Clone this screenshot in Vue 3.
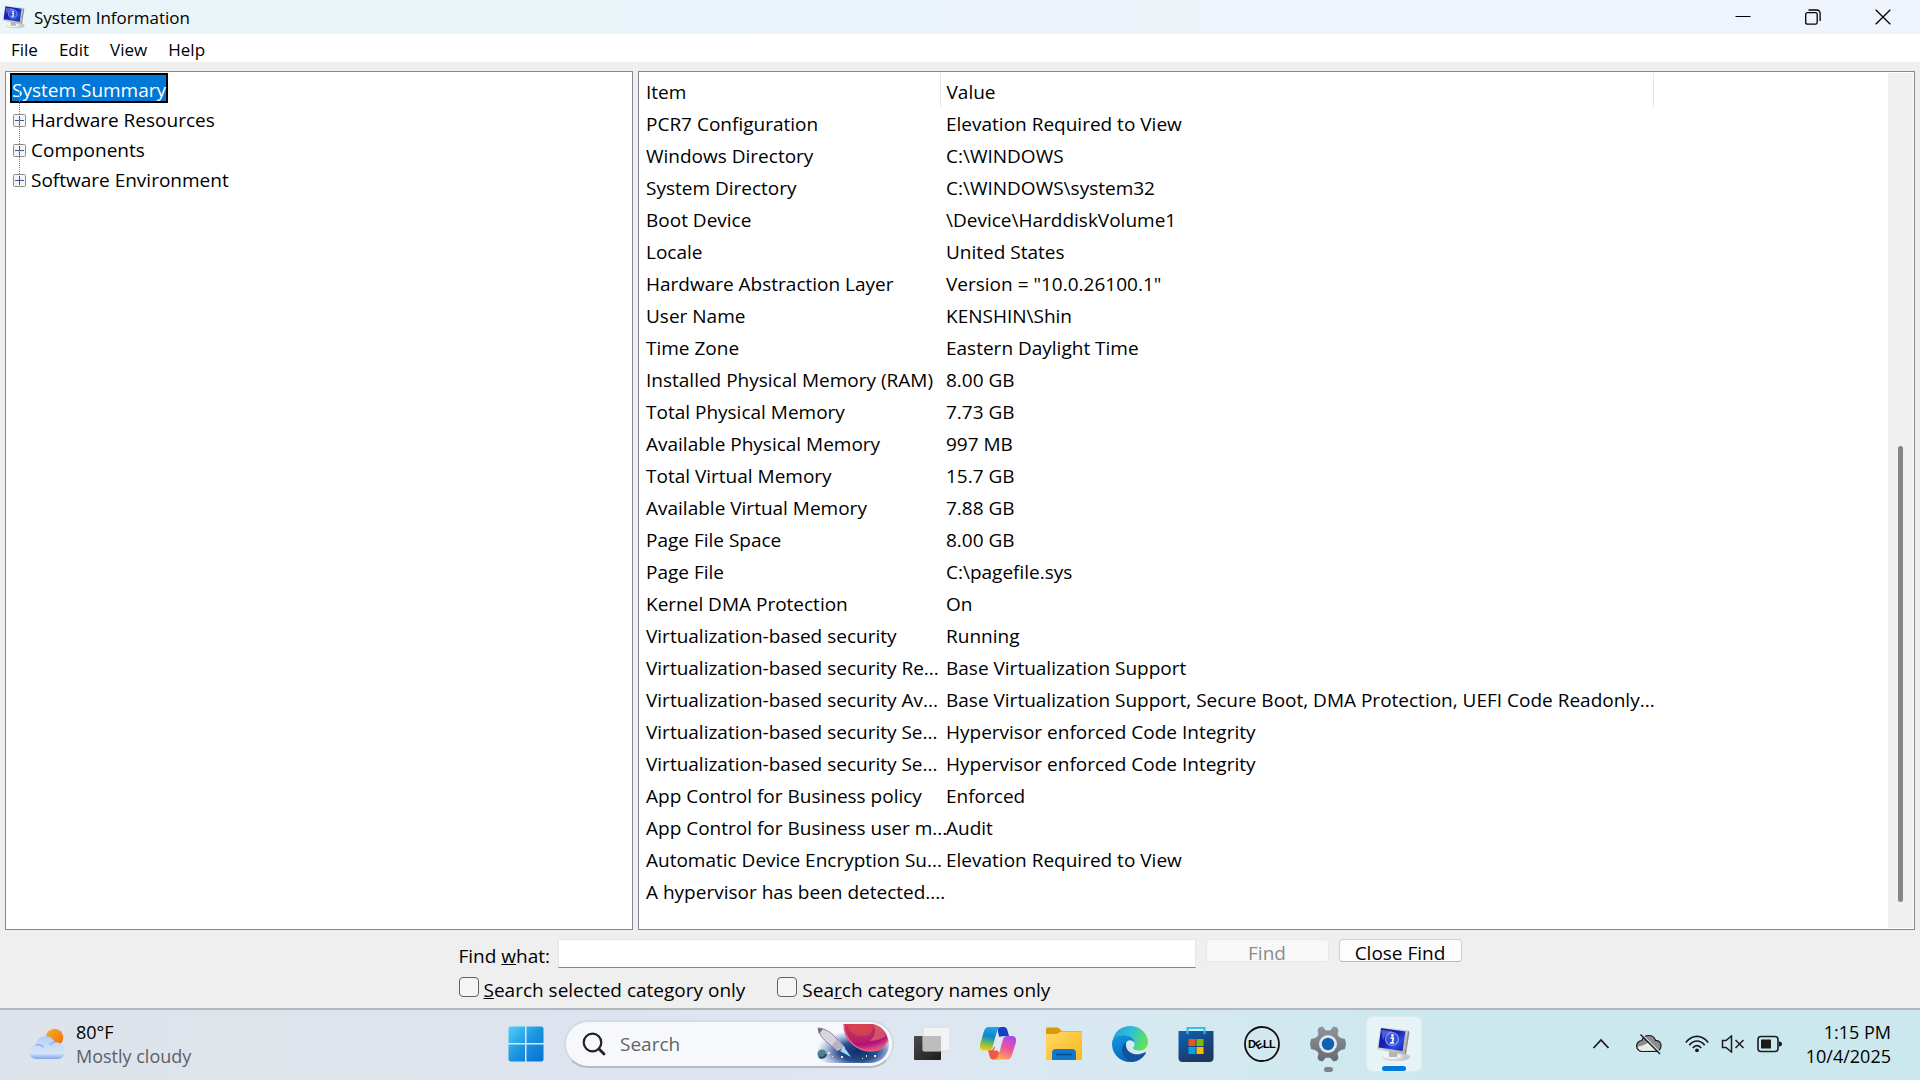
<script setup>
import { ref } from 'vue';

const menus = ['File', 'Edit', 'View', 'Help'];

const categories = ['Hardware Resources', 'Components', 'Software Environment'];

const rows = [
  { item: 'PCR7 Configuration', value: 'Elevation Required to View' },
  { item: 'Windows Directory', value: 'C:\\WINDOWS' },
  { item: 'System Directory', value: 'C:\\WINDOWS\\system32' },
  { item: 'Boot Device', value: '\\Device\\HarddiskVolume1' },
  { item: 'Locale', value: 'United States' },
  { item: 'Hardware Abstraction Layer', value: 'Version = "10.0.26100.1"' },
  { item: 'User Name', value: 'KENSHIN\\Shin' },
  { item: 'Time Zone', value: 'Eastern Daylight Time' },
  { item: 'Installed Physical Memory (RAM)', value: '8.00 GB' },
  { item: 'Total Physical Memory', value: '7.73 GB' },
  { item: 'Available Physical Memory', value: '997 MB' },
  { item: 'Total Virtual Memory', value: '15.7 GB' },
  { item: 'Available Virtual Memory', value: '7.88 GB' },
  { item: 'Page File Space', value: '8.00 GB' },
  { item: 'Page File', value: 'C:\\pagefile.sys' },
  { item: 'Kernel DMA Protection', value: 'On' },
  { item: 'Virtualization-based security', value: 'Running' },
  { item: 'Virtualization-based security Re...', value: 'Base Virtualization Support' },
  { item: 'Virtualization-based security Av...', value: 'Base Virtualization Support, Secure Boot, DMA Protection, UEFI Code Readonly...' },
  { item: 'Virtualization-based security Se...', value: 'Hypervisor enforced Code Integrity' },
  { item: 'Virtualization-based security Se...', value: 'Hypervisor enforced Code Integrity' },
  { item: 'App Control for Business policy', value: 'Enforced' },
  { item: 'App Control for Business user m...', value: 'Audit' },
  { item: 'Automatic Device Encryption Su...', value: 'Elevation Required to View' },
  { item: 'A hypervisor has been detected....', value: '' }
];

const findText = ref('');
const selectedOnly = ref(false);
const namesOnly = ref(false);
</script>

<template>
  <div class="desktop">
    <!-- shared gradients and the monitor icon -->
    <svg class="defs" width="0" height="0" aria-hidden="true">
      <defs>
        <linearGradient id="screen" x1="0" y1="0" x2="1" y2="1">
          <stop offset="0" stop-color="#0a1fb4" />
          <stop offset="0.45" stop-color="#1420b8" />
          <stop offset="0.7" stop-color="#2a4be0" />
          <stop offset="1" stop-color="#0a16a0" />
        </linearGradient>
        <linearGradient id="bezel" x1="0" y1="0" x2="1" y2="1">
          <stop offset="0" stop-color="#f4f4f4" />
          <stop offset="1" stop-color="#a9a9a9" />
        </linearGradient>
        <symbol id="monitor" viewBox="0 0 36 36">
          <ellipse cx="22" cy="31" rx="12" ry="4" fill="#8d9599" opacity="0.45" />
          <ellipse cx="17" cy="31" rx="11" ry="4" fill="#d7d7d7" />
          <ellipse cx="16" cy="30" rx="9" ry="3" fill="#f3f3f3" />
          <path d="M13 24l9 2-1 5h-8z" fill="#b5b5b5" />
          <path d="M4 0.500L32 4.500L28.500 28L1 23.500z" fill="url(#bezel)" />
          <path d="M32 4.500l1.500 1.500L30 28l-1.500 0z" fill="#8c8c8c" />
          <path d="M5 2L29.500 5.500L26.500 25L2.500 21.500z" fill="url(#screen)" />
          <path d="M5 4l2 10 3-6 3 5 3-8z" fill="#8ea0f0" opacity="0.5" />
          <circle cx="16" cy="13" r="6.500" fill="#3d5cd0" opacity="0.8" stroke="#a9b9f2" stroke-width="1.200" />
          <circle cx="16.500" cy="9.500" r="1.400" fill="#fff" />
          <path d="M14.500 12h2.800l-1 5h1.700M14 17h2" stroke="#fff" stroke-width="1.600" fill="none" />
        </symbol>
      </defs>
    </svg>

    <header class="titlebar">
      <svg class="title-icon" aria-hidden="true"><use href="#monitor" /></svg>
      <span class="title">System Information</span>
      <div class="window-buttons">
        <button type="button" aria-label="Minimize">
          <svg width="16" height="16" viewBox="0 0 16 16"><path d="M0.500 7.500h15" stroke="#000" /></svg>
        </button>
        <button type="button" aria-label="Restore">
          <svg width="16" height="16" viewBox="0 0 16 16" fill="none" stroke="#000" stroke-width="1.300">
            <rect x="0.700" y="3.700" width="11.500" height="11.500" rx="1.800" />
            <path d="M3.500 1h8.300a3.300 3.300 0 0 1 3.300 3.300v7.700" />
          </svg>
        </button>
        <button type="button" aria-label="Close">
          <svg width="16" height="16" viewBox="0 0 16 16"><path d="M0.700 0.700l14.600 14.600M15.300 0.700L0.700 15.300" stroke="#000" stroke-width="1.300" /></svg>
        </button>
      </div>
    </header>

    <nav class="menubar">
      <button v-for="menu in menus" :key="menu" type="button">{{ menu }}</button>
    </nav>

    <main class="panes">
      <section class="pane tree">
        <button type="button" class="summary">System Summary</button>
        <ul>
          <li v-for="category in categories" :key="category">
            <button type="button" class="expander" :aria-label="'Expand ' + category">
              <svg width="13" height="13" viewBox="0 0 13 13">
                <rect x="0.500" y="0.500" width="12" height="12" rx="1" fill="#f4f4f4" stroke="#8c8c8c" />
                <path d="M2 6.500h9M6.500 2v9" stroke="#3c5399" />
              </svg>
            </button>
            <span>{{ category }}</span>
          </li>
        </ul>
      </section>

      <section class="pane details">
        <table>
          <colgroup>
            <col class="col-item" />
            <col class="col-value" />
            <col />
          </colgroup>
          <thead>
            <tr>
              <th>Item</th>
              <th>Value</th>
              <th></th>
            </tr>
          </thead>
          <tbody>
            <tr v-for="(row, index) in rows" :key="index">
              <td>{{ row.item }}</td>
              <td>{{ row.value }}</td>
              <td></td>
            </tr>
          </tbody>
        </table>
        <div class="scrollbar">
          <div class="thumb"></div>
        </div>
      </section>
    </main>

    <form class="findbar" @submit.prevent>
      <div class="find-row">
        <label for="find">Find <u>w</u>hat:</label>
        <input id="find" v-model="findText" type="text" />
        <button type="submit" disabled>Find</button>
        <button type="button">Close Find</button>
      </div>
      <div class="check-row">
        <div class="check">
          <input id="selected" v-model="selectedOnly" type="checkbox" />
          <label for="selected"><u>S</u>earch selected category only</label>
        </div>
        <div class="check">
          <input id="names" v-model="namesOnly" type="checkbox" />
          <label for="names">Sea<u>r</u>ch category names only</label>
        </div>
      </div>
    </form>

    <footer class="taskbar">
      <div class="weather">
        <svg width="36" height="32" viewBox="0 0 36 32" aria-hidden="true">
          <defs>
            <linearGradient id="sun" x1="0" y1="0" x2="1" y2="1">
              <stop offset="0" stop-color="#f0b429" />
              <stop offset="1" stop-color="#f26a0a" />
            </linearGradient>
            <linearGradient id="cloud" x1="0" y1="0" x2="0" y2="1">
              <stop offset="0" stop-color="#b3cdf6" />
              <stop offset="0.75" stop-color="#d6e6fa" />
              <stop offset="1" stop-color="#7ba5ea" />
            </linearGradient>
          </defs>
          <circle cx="25.500" cy="9.500" r="8.800" fill="url(#sun)" />
          <path d="M7.500 31a7 7 0 0 1-1-14C7.500 11 12 8 16.500 8c4 0 7.500 2.200 9 6 6 0 10.500 3.500 10.500 9 0 4.500-3.500 8-8 8z" fill="url(#cloud)" />
          <path d="M6.500 17c3-1 6 0 8 2.500M20.500 17c1.500-2 4-3 6-2.800" stroke="#83a9ec" stroke-width="1.500" fill="none" opacity="0.8" />
        </svg>
        <div class="weather-text">
          <span>80°F</span>
          <span class="muted">Mostly cloudy</span>
        </div>
      </div>

      <div class="apps">
        <button type="button" class="app" aria-label="Start">
          <svg width="36" height="36" viewBox="0 0 36 36">
            <defs>
              <linearGradient id="win" x1="0" y1="0" x2="1" y2="1">
                <stop offset="0" stop-color="#4fd0fb" />
                <stop offset="0.5" stop-color="#1b95e0" />
                <stop offset="1" stop-color="#0670cf" />
              </linearGradient>
            </defs>
            <path d="M2 0.500h15v16.500H0.500V2zM18.500 0.500H34l1.500 1.500v15h-17zM0.500 18.500H17v17H2L0.500 34zM18.500 18.500h17V34L34 35.500H18.500z" fill="url(#win)" />
          </svg>
        </button>
        <label class="search">
          <svg width="24" height="24" viewBox="0 0 24 24" fill="none" stroke="#222" stroke-linecap="round" aria-hidden="true">
            <circle cx="10.500" cy="10.500" r="8.800" stroke-width="2.200" />
            <path d="M17 17l5 5" stroke-width="2.800" />
          </svg>
          <input type="text" placeholder="Search" />
          <svg class="rocket" width="76" height="40" viewBox="0 0 76 40" aria-hidden="true">
            <defs>
              <radialGradient id="space" cx="0.580" cy="0.700" r="0.560">
                <stop offset="0" stop-color="#0b2f6a" />
                <stop offset="0.450" stop-color="#284d8d" />
                <stop offset="0.750" stop-color="#a3b5d8" />
                <stop offset="1" stop-color="#f5f8fc" />
              </radialGradient>
              <radialGradient id="planet" cx="0.350" cy="0.100" r="0.900">
                <stop offset="0" stop-color="#d8404e" />
                <stop offset="0.4" stop-color="#c02a62" />
                <stop offset="0.75" stop-color="#b0107e" />
                <stop offset="1" stop-color="#e0507a" />
              </radialGradient>
            </defs>
            <path d="M1 26C3 14 15 3 30 1h27c11 0 18 8 18 19S67 39 56 39H15C6 39 1 34 1 26z" fill="url(#space)" />
            <path d="M30 0h29c8 2 14 8 15 16-2 6-9 11-17 11C43 27 29 16 30 0z" fill="url(#planet)" />
            <path d="M30 0c0 16 13 27 27 27 8 0 14-4 17-11" stroke="#e8607a" stroke-width="1.500" fill="none" />
            <path d="M32 0c4 9 10 12 17 12S61 7 58 0" fill="#dc4a50" opacity="0.6" />
            <path d="M58 0c5 5 4 12-3 17 8 0 15-3 18-6-2-6-8-10-15-11z" fill="#f08468" opacity="0.5" />
            <path d="M4 4c6 0 13 4 18 10l7 9-5 4-9-7C9 15 5 11 4 4z" fill="#d8d3dd" stroke="#77708a" stroke-width="0.800" />
            <path d="M4 4l5 1-4 5z" fill="#74668a" />
            <path d="M18 21l4-5 4 7-3 4zM24 16l7 7-1 4-8-5z" fill="#b8b0c2" />
            <path d="M26 27l4-4 7 10z" fill="#9edcff" />
            <circle cx="8" cy="30" r="4.500" fill="#4c8090" />
            <path d="M5 33a4.500 4.500 0 0 0 7-3" stroke="#234b70" stroke-width="2" fill="none" />
            <path d="M14 28h2v2h-2zM27 32h2v2h-2zM18 32h1v1h-1zM52 31h1v2h-1zM60 31h2v2h-2zM48 34h1v1h-1z" fill="#f4e7c8" />
          </svg>
        </label>
        <button type="button" class="app" aria-label="Task view">
          <svg width="36" height="36" viewBox="0 0 36 36">
            <defs>
              <linearGradient id="dark" x1="0" y1="0" x2="1" y2="1">
                <stop offset="0" stop-color="#4b4b4b" />
                <stop offset="1" stop-color="#1c1c1c" />
              </linearGradient>
            </defs>
            <rect y="10" width="27" height="24" rx="1" fill="url(#dark)" />
            <rect x="9" y="1" width="27" height="24" rx="1" fill="#f3f3f3" stroke="#d6d9de" />
            <path d="M9 10h18v15H9z" fill="#bdbdbd" />
          </svg>
        </button>
        <button type="button" class="app" aria-label="Copilot">
          <svg width="36" height="36" viewBox="0 0 36 36">
            <defs>
              <linearGradient id="cpa" x1="0.500" y1="0" x2="0.300" y2="1">
                <stop offset="0" stop-color="#1ba6e8" />
                <stop offset="0.4" stop-color="#1286c8" />
                <stop offset="0.65" stop-color="#5cb56a" />
                <stop offset="1" stop-color="#f5cf00" />
              </linearGradient>
              <linearGradient id="cpb" x1="0.700" y1="0" x2="0.300" y2="1">
                <stop offset="0" stop-color="#a84af0" />
                <stop offset="0.5" stop-color="#f0559a" />
                <stop offset="1" stop-color="#ffab4d" />
              </linearGradient>
            </defs>
            <path d="M18 1h6c2 0 3 1.500 3.500 3.500L29 10h-4c-3 0-4 1-5 4l-2-8z" fill="#1a3fc4" />
            <path d="M9 1h12c-3 1-3.500 3-4.500 6l-4 14c-1 3-2.500 3.500-5.500 3.500H4c-3 0-4.500-2-4-6L4 5C5 2.500 6.500 1 9 1z" fill="url(#cpa)" />
            <path d="M18 33.500h-5c-2 0-3-1.500-3.500-3.500L8 24.500c4 0 5-1 6-4l5 6z" fill="#ee5a3e" />
            <path d="M27 33.500H14c3-1 4-3 5-6l4-14c1-3 2.500-3.500 5.500-3.500H32c3 0 4.500 2 4 6l-4 13c-1 3-2.500 4.500-5 4.500z" fill="url(#cpb)" />
            <path d="M20.500 10.500h2.500q-1.500 1-2 3l-3.500 11h-2.500q-1 0-1.500-.5 1-1 1.500-2.500l3-9q.8-2 2.500-2z" fill="#e3eaf3" />
          </svg>
        </button>
        <button type="button" class="app" aria-label="File Explorer">
          <svg width="36" height="36" viewBox="0 0 36 36">
            <defs>
              <linearGradient id="folder" x1="0" y1="0" x2="1" y2="1">
                <stop offset="0" stop-color="#ffd766" />
                <stop offset="1" stop-color="#fbb91c" />
              </linearGradient>
            </defs>
            <path d="M0 3q0-1.500 1.500-1.500H12L16 5h19q1 0 1 1v8H0z" fill="#dc9a06" />
            <path d="M0 8h10.500L15 5.500h21V34H0z" fill="url(#folder)" />
            <path d="M6 34V27q0-4 4-4h16q4 0 4 4v7z" fill="#1277cd" />
            <path d="M11 28.500h14" stroke="#0b4f91" stroke-width="2" stroke-linecap="round" />
          </svg>
        </button>
        <button type="button" class="app" aria-label="Edge">
          <svg width="36" height="36" viewBox="0 0 36 36">
            <defs>
              <linearGradient id="edgeTop" x1="0" y1="0.300" x2="1" y2="0.600">
                <stop offset="0" stop-color="#249fdf" />
                <stop offset="0.5" stop-color="#30c3d2" />
                <stop offset="1" stop-color="#65e34e" />
              </linearGradient>
              <linearGradient id="edgeLeft" x1="0" y1="0" x2="0.500" y2="1">
                <stop offset="0" stop-color="#129be0" />
                <stop offset="1" stop-color="#0861bd" />
              </linearGradient>
            </defs>
            <path d="M1 13C3 5 10 0 18 0c10 0 18 7.500 18 16 0 5-4 8.500-8.500 8.500-3.500 0-6.500-1-6.500-2.500 0-1 1.500-1.500 1.500-4C22.500 13 17 9 11 9 6 9 2.500 11 0 16z" fill="url(#edgeTop)" />
            <path d="M0 18C0 12 5 9 11 9c7 0 11.500 4 11.500 8-2-4-8.500-4-9 2-.5 8 8 14 18 10C28 33 23 36 18 36 8 36 0 28 0 18z" fill="url(#edgeLeft)" />
            <path d="M14 16c-4 3-5.500 9-2 14 3 4 7 6 9 6 6-1 10-4 13-9 0-1-.8-1-1.500-.5-8 4-17.500 1-18.500-6.500-.2-1.500-.2-2.800 0-4z" fill="#10529b" />
          </svg>
        </button>
        <button type="button" class="app" aria-label="Microsoft Store">
          <svg width="36" height="36" viewBox="0 0 36 36">
            <defs>
              <linearGradient id="bag" x1="0" y1="0" x2="0.600" y2="1">
                <stop offset="0" stop-color="#0a63b4" />
                <stop offset="1" stop-color="#20355f" />
              </linearGradient>
            </defs>
            <path d="M0.500 5h35v27q0 4-4 4h-27q-4 0-4-4z" fill="url(#bag)" />
            <path d="M9.500 8V2h17v6" fill="none" stroke="#2fc0f2" stroke-width="2" />
            <path d="M10.500 13h7v7h-7z" fill="#f25022" />
            <path d="M18.500 13h7v7h-7z" fill="#7fba00" />
            <path d="M10.500 21h7v7h-7z" fill="#00a4ef" />
            <path d="M18.500 21h7v7h-7z" fill="#ffb900" />
          </svg>
        </button>
        <button type="button" class="app" aria-label="Dell">
          <svg width="36" height="36" viewBox="0 0 36 36">
            <circle cx="18" cy="18" r="17" fill="none" stroke="#111" stroke-width="1.800" />
            <g class="dell">
              <text x="4" y="22">D</text>
              <text x="11" y="22" transform="rotate(-32 16 18)">E</text>
              <text x="19" y="22">L</text>
              <text x="25" y="22">L</text>
            </g>
          </svg>
        </button>
        <button type="button" class="app running" aria-label="Settings">
          <svg width="36" height="36" viewBox="0 0 36 36">
            <defs>
              <linearGradient id="gear" x1="0" y1="0" x2="0" y2="1">
                <stop offset="0" stop-color="#8d949b" />
                <stop offset="1" stop-color="#656b72" />
              </linearGradient>
            </defs>
            <path d="M9 1.500l3.500-1 3 3.500q2.500 1 5 0l3-3.500 3.500 1L28.500 4l-1 4.500q1 2.500 3.500 3.500l4 1 1 5-1 5-4 1q-2.500 1-3.500 3.500l1 4.500-1.500 2.500-3.500 1-3-3.500q-2.500-1-5 0l-3 3.500-3.500-1L7.500 32l1-4.500Q7.500 25 5 24l-4-1-1-5 1-5 4-1q2.500-1 3.500-3.500L7.500 4z" fill="url(#gear)" />
            <circle cx="18" cy="18" r="9" fill="#e4e8eb" />
            <circle cx="18" cy="18" r="6.200" fill="#0c62b4" />
          </svg>
        </button>
        <button type="button" class="app running active" aria-label="System Information">
          <svg width="36" height="36" aria-hidden="true"><use href="#monitor" /></svg>
        </button>
      </div>

      <div class="tray">
        <button type="button" class="chevron" aria-label="Show hidden icons">
          <svg width="18" height="12" viewBox="0 0 18 12"><path d="M1.500 10L9 2l7.500 8" fill="none" stroke="#1b1b1b" stroke-width="1.800" /></svg>
        </button>
        <button type="button" class="onedrive" aria-label="OneDrive">
          <svg width="26" height="22" viewBox="0 0 26 22">
            <path d="M6.500 18.500a5.500 5.500 0 0 1-.7-11C7 4 10 2.500 13 2.500c3.500 0 5.500 2 6.500 4.800 3.500.2 5.500 2.500 5.500 5.500s-2.200 5.700-5 5.700z" fill="#8d8d8d" />
            <path d="M6 18q-4-1-4.500-4 6-1 11-4.500L22 17.500z" fill="#ececec" />
            <path d="M6.500 18.500a5.500 5.500 0 0 1-.7-11C7 4 10 2.500 13 2.500c3.500 0 5.500 2 6.500 4.800 3.500.2 5.500 2.500 5.500 5.500s-2.200 5.700-5 5.700z" fill="none" stroke="#1b1b1b" stroke-width="1.200" />
            <path d="M6 1.500l18.500 18.500" stroke="#cdeaf0" stroke-width="1.500" />
            <path d="M4.500 1.500L24 21" stroke="#1b1b1b" stroke-width="1.400" />
          </svg>
        </button>
        <button type="button" class="status" aria-label="Network, volume and battery">
          <svg width="24" height="18" viewBox="0 0 24 18" fill="none" stroke="#1b1b1b" stroke-width="1.700">
            <path d="M0.800 7.500C7-.8 17-.8 23.200 7.500M4.300 10.200c4.200-5.600 11.200-5.600 15.400 0M7.800 13c2.300-3.200 6.100-3.200 8.400 0" />
            <circle cx="12" cy="15.300" r="1.900" fill="#1b1b1b" stroke="none" />
          </svg>
          <svg width="24" height="18" viewBox="0 0 24 18" fill="none" stroke="#1b1b1b" stroke-width="1.500">
            <path d="M10.500 1v16L5 12.500H1.500v-7H5z" />
            <path d="M14.500 5l8 8M22.500 5l-8 8" />
          </svg>
          <svg width="26" height="18" viewBox="0 0 26 18">
            <rect x="1" y="1.500" width="20" height="15" rx="3" fill="none" stroke="#1b1b1b" stroke-width="1.600" />
            <rect x="4" y="4.500" width="10" height="9" rx="0.500" fill="#1b1b1b" />
            <path d="M22 6.500q3 0 3 2.500t-3 2.500z" fill="#1b1b1b" />
          </svg>
        </button>
        <div class="clock">
          <span>1:15 PM</span>
          <span>10/4/2025</span>
        </div>
      </div>
    </footer>
  </div>
</template>

<style>
body {
  margin: 0;
}
</style>

<style scoped>
.desktop {
  display: flex;
  flex-direction: column;
  min-height: 100vh;
  background: #efefef;
  color: #000;
  font-family: "Open Sans", "Noto Sans", sans-serif;
  font-size: 19px;
  line-height: 30px;
}

.desktop * {
  box-sizing: border-box;
}

.defs {
  position: absolute;
}

button {
  padding: 0;
  border: 0;
  background: none;
  color: inherit;
  font: inherit;
}

input {
  font: inherit;
  outline: none;
}

svg {
  display: block;
  flex: none;
}

/* title bar */
.titlebar {
  display: flex;
  align-items: center;
  height: 34px;
  padding: 0 2px;
  background: linear-gradient(90deg, #e9f5f9, #e9f4fa 35%, #eff3fb 65%);
}

.title-icon {
  width: 24px;
  height: 24px;
}

.title {
  margin-left: 8px;
  padding-top: 2px;
  font-size: 17px;
}

.window-buttons {
  display: flex;
  margin-left: auto;
}

.window-buttons button {
  display: flex;
  align-items: center;
  justify-content: center;
  width: 70px;
  height: 34px;
}

/* menu bar */
.menubar {
  display: flex;
  gap: 21px;
  height: 28px;
  padding: 0 11px;
  background: #fff;
  font-size: 17px;
  line-height: 32px;
}

/* panes */
.panes {
  display: grid;
  grid-template-columns: 628fr 1277fr;
  gap: 5px;
  flex: 1;
  padding: 9px 5px 0;
}

.pane {
  border: 1px solid #828790;
  background: #fff;
}

.tree {
  padding: 1px 4px;
}

.summary {
  display: block;
  height: 30px;
  padding-top: 1px;
  border: 2px solid #000;
  background: #0078d7;
  color: #fff;
  line-height: 28px;
}

.tree ul {
  margin: 0 0 0 9px;
  padding: 2px 0 0;
  list-style: none;
}

.tree li {
  position: relative;
  display: flex;
  align-items: center;
  gap: 5px;
  height: 30px;
}

/* dotted branch line running behind the expander boxes */
.tree li::before {
  content: "";
  position: absolute;
  top: -15px;
  left: 0;
  height: 30px;
  border-left: 1px dotted #808080;
}

.expander {
  position: relative;
  margin-left: -6px;
}

.details {
  display: flex;
  padding: 1px;
}

table {
  flex: 1;
  align-self: flex-start;
  table-layout: fixed;
  width: 100%;
  border-collapse: collapse;
  white-space: nowrap;
}

.col-item {
  width: 300px;
}

.col-value {
  width: 713px;
}

th {
  height: 34px;
  padding: 4px 7px 0 6px;
  border-right: 1px solid #e5e5e5;
  font-weight: 400;
  text-align: left;
}

th:last-child {
  border-right: 0;
}

td {
  height: 32px;
  padding: 2px 0 0 6px;
}

.scrollbar {
  display: flex;
  flex-direction: column;
  align-items: center;
  width: 25px;
  background: #f0f0f0;
}

.scrollbar::before {
  content: "";
  flex: 373;
}

.scrollbar::after {
  content: "";
  flex: 26;
}

.thumb {
  flex: 456;
  width: 5px;
  border-radius: 3px;
  background: #858585;
}

/* find bar */
.findbar {
  width: 1003px;
  max-width: 100%;
  height: 78px;
  margin: 0 auto;
  padding-top: 9px;
}

.find-row {
  display: flex;
  gap: 10px;
  height: 29px;
}

.find-row label {
  flex: none;
  width: 89px;
  line-height: 34px;
  white-space: nowrap;
}

.find-row input {
  flex: 1;
  min-width: 0;
  border: 1px solid #e5e5e5;
  border-bottom: 1px solid #858585;
  background: #fff;
}

.find-row button {
  width: 123px;
  height: 23px;
  border: 1px solid #d0d0d0;
  border-bottom-color: #b8b8b8;
  border-radius: 4px;
  background: #fdfdfd;
  line-height: 26px;
}

.find-row button:disabled {
  border-color: #e8e8e8;
  background: #f8f8f8;
  color: #8b8b8b;
}

.check-row {
  display: flex;
  gap: 32px;
  padding-top: 9px;
}

.check {
  display: flex;
  gap: 5px;
}

.check input {
  appearance: none;
  width: 20px;
  height: 20px;
  margin: 0;
  border: 1px solid #626262;
  border-radius: 4px;
  background: #f5f5f5;
}

.check label {
  line-height: 26px;
}

/* taskbar */
.taskbar {
  display: grid;
  grid-template-columns: 1fr auto 1fr;
  align-items: center;
  height: 72px;
  padding-bottom: 2px;
  border-top: 2px solid #b0b8be;
  background: linear-gradient(90deg, #dde3ec, #dee4ea 12%, #dde4ef 28%, #dfe6f1 46%, #d6e9f0 60%, #cce8ee 75%, #cbe8ef);
  font-size: 18px;
  line-height: 24px;
}

.weather {
  display: flex;
  align-items: center;
  gap: 11px;
  padding-left: 29px;
}

.weather-text {
  display: flex;
  flex-direction: column;
}

.muted {
  color: #5c6066;
}

.apps {
  display: flex;
  align-items: center;
  gap: 10px;
}

.app {
  position: relative;
  display: flex;
  align-items: center;
  justify-content: center;
  width: 56px;
  height: 56px;
  border-radius: 6px;
}

.active {
  border: 1px solid #dde9ee;
  background: #e6f3f7;
}

.running::after {
  content: "";
  position: absolute;
  bottom: 0;
  width: 9px;
  height: 5px;
  border-radius: 3px;
  background: #7b8488;
}

.active::after {
  width: 24px;
  background: #0078d7;
}

.dell {
  font-family: "Liberation Sans", Arial, sans-serif;
  font-size: 11px;
  font-weight: 700;
}

.search {
  display: flex;
  align-items: center;
  gap: 14px;
  width: 330px;
  height: 48px;
  padding: 0 2px 0 16px;
  border: 2px solid #d3dae4;
  border-bottom-color: #b5bcc5;
  border-radius: 24px;
  background: #f6f8fc;
}

.search input {
  flex: 1;
  min-width: 0;
  padding: 0;
  border: 0;
  background: none;
  font-size: 19px;
}

.search input::placeholder {
  color: #5f6368;
  opacity: 1;
}

.tray {
  display: flex;
  align-items: center;
  justify-content: flex-end;
  padding-right: 29px;
}

.onedrive {
  margin: 0 23px 0 26px;
}

.status {
  display: flex;
  align-items: center;
  gap: 12px;
  margin-right: 23px;
}

.clock {
  display: flex;
  flex-direction: column;
  text-align: right;
}
</style>
